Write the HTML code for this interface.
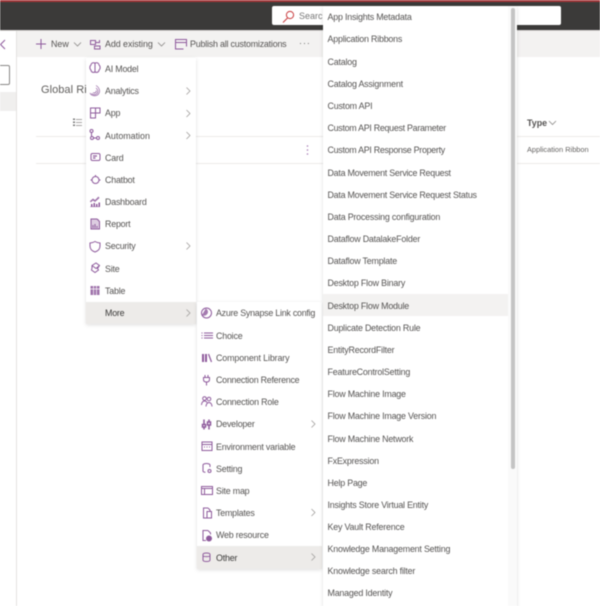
<!DOCTYPE html>
<html><head><meta charset="utf-8">
<style>
html,body{margin:0;padding:0;background:#fff;width:600px;height:606px;overflow:hidden}
#p{position:relative;width:600px;height:606px;overflow:hidden;font-family:"Liberation Sans",sans-serif;font-size:8.9px;color:#555352;filter:blur(.42px)}
.b{position:absolute}
.t{position:absolute;white-space:nowrap;line-height:12px;height:12px;letter-spacing:-.2px}
.m{position:absolute;background:#fff;box-shadow:0 1px 4px rgba(0,0,0,.13)}
svg{position:absolute;left:0;top:0}
</style></head><body><div id="p">
<div class="b" style="left:0;top:0;width:600px;height:30px;background:#3b3a39"></div>
<div class="b" style="left:0;top:0;width:600px;height:1.5px;background:#a4373a"></div>
<div class="b" style="left:0;top:30px;width:600px;height:1px;background:#d8d6d4"></div>
<div class="b" style="left:272px;top:6px;width:289px;height:19px;background:#fff;border-radius:2px"></div>
<div class="t" style="left:299px;top:10px;font-size:9px;color:#777;letter-spacing:0">Search</div>
<div class="b" style="left:17px;top:31px;width:583px;height:26px;background:#f3f2f1"></div>
<div class="b" style="left:16px;top:31px;width:1px;height:575px;background:#e4e2e0"></div>
<div class="b" style="left:-2px;top:65px;width:9.500px;height:18px;border:1px solid #8a8886;border-radius:2px"></div>
<div class="b" style="left:0;top:92px;width:16px;height:19px;background:#f0efee"></div>
<div class="t" style="left:51px;top:38px;letter-spacing:0">New</div>
<div class="t" style="left:105px;top:38px;letter-spacing:-.05px">Add existing</div>
<div class="t" style="left:190px;top:38px">Publish all customizations</div>
<div class="t" style="left:299px;top:37px;letter-spacing:1px;color:#666">···</div>
<div class="t" style="left:41px;top:84px;font-size:11px;color:#605e5c;letter-spacing:.05px">Global Ri</div>
<div class="t" style="left:527px;top:117px;font-weight:bold;color:#555352;letter-spacing:0">Type</div>
<div class="t" style="left:527px;top:144px;font-size:7.4px;color:#666463;letter-spacing:0">Application Ribbon</div>
<div class="b" style="left:36px;top:136px;width:564px;height:1px;background:#edebe9"></div>
<div class="b" style="left:36px;top:163px;width:564px;height:1px;background:#edebe9"></div>

<div class="m" style="left:86px;top:58px;width:110px;height:266px"></div>
<div class="b" style="left:86px;top:302px;width:110px;height:22px;background:#edebe9"></div>
<div class="t" style="left:105px;top:63px">AI Model</div>
<div class="t" style="left:105px;top:85px">Analytics</div>
<div class="t" style="left:105px;top:107px">App</div>
<div class="t" style="left:105px;top:129.500px;letter-spacing:0">Automation</div>
<div class="t" style="left:105px;top:152px">Card</div>
<div class="t" style="left:105px;top:174px">Chatbot</div>
<div class="t" style="left:105px;top:196px">Dashboard</div>
<div class="t" style="left:105px;top:218px">Report</div>
<div class="t" style="left:105px;top:240px">Security</div>
<div class="t" style="left:105px;top:262.500px">Site</div>
<div class="t" style="left:105px;top:285px">Table</div>
<div class="t" style="left:105px;top:307px;color:#3b3a39">More</div>

<div class="m" style="left:197px;top:302px;width:125px;height:267px"></div>
<div class="b" style="left:197px;top:546px;width:125px;height:23px;background:#edebe9"></div>
<div class="t" style="left:216px;top:307px;letter-spacing:-.24px">Azure Synapse Link config</div>
<div class="t" style="left:216px;top:329.500px">Choice</div>
<div class="t" style="left:216px;top:351.500px;letter-spacing:-.12px">Component Library</div>
<div class="t" style="left:216px;top:374px;letter-spacing:-.25px">Connection Reference</div>
<div class="t" style="left:216px;top:396px">Connection Role</div>
<div class="t" style="left:216px;top:418px">Developer</div>
<div class="t" style="left:216px;top:440.500px">Environment variable</div>
<div class="t" style="left:216px;top:462.500px">Setting</div>
<div class="t" style="left:216px;top:485px">Site map</div>
<div class="t" style="left:216px;top:507px">Templates</div>
<div class="t" style="left:216px;top:529px">Web resource</div>
<div class="t" style="left:216px;top:552px;color:#3b3a39">Other</div>

<div class="m" style="left:323px;top:6px;width:194px;height:610px"></div>
<div class="b" style="left:323px;top:294px;width:185px;height:22px;background:#f3f2f1"></div>
<div class="b" style="left:508px;top:6px;width:9px;height:600px;background:#fafafa"></div>
<div class="b" style="left:511px;top:8px;width:4px;height:461px;background:#c4c4c4;border-radius:2px"></div>
<div class="t" style="left:327.5px;top:11px">App Insights Metadata</div>
<div class="t" style="left:327.5px;top:33px">Application Ribbons</div>
<div class="t" style="left:327.5px;top:55.500px">Catalog</div>
<div class="t" style="left:327.5px;top:77.500px">Catalog Assignment</div>
<div class="t" style="left:327.5px;top:99.500px">Custom API</div>
<div class="t" style="left:327.5px;top:121.500px;letter-spacing:-.28px">Custom API Request Parameter</div>
<div class="t" style="left:327.5px;top:144px;letter-spacing:-.28px">Custom API Response Property</div>
<div class="t" style="left:327.5px;top:166.500px;letter-spacing:-.24px">Data Movement Service Request</div>
<div class="t" style="left:327.5px;top:188.500px;letter-spacing:-.24px">Data Movement Service Request Status</div>
<div class="t" style="left:327.5px;top:210.500px">Data Processing configuration</div>
<div class="t" style="left:327.5px;top:232.500px">Dataflow DatalakeFolder</div>
<div class="t" style="left:327.5px;top:255px">Dataflow Template</div>
<div class="t" style="left:327.5px;top:277px">Desktop Flow Binary</div>
<div class="t" style="left:327.5px;top:299.500px">Desktop Flow Module</div>
<div class="t" style="left:327.5px;top:321.500px">Duplicate Detection Rule</div>
<div class="t" style="left:327.5px;top:343.500px">EntityRecordFilter</div>
<div class="t" style="left:327.5px;top:365.500px">FeatureControlSetting</div>
<div class="t" style="left:327.5px;top:388px">Flow Machine Image</div>
<div class="t" style="left:327.5px;top:410px">Flow Machine Image Version</div>
<div class="t" style="left:327.5px;top:432.500px">Flow Machine Network</div>
<div class="t" style="left:327.5px;top:454.500px">FxExpression</div>
<div class="t" style="left:327.5px;top:476.500px">Help Page</div>
<div class="t" style="left:327.5px;top:498.500px">Insights Store Virtual Entity</div>
<div class="t" style="left:327.5px;top:521px">Key Vault Reference</div>
<div class="t" style="left:327.5px;top:543px">Knowledge Management Setting</div>
<div class="t" style="left:327.5px;top:565px">Knowledge search filter</div>
<div class="t" style="left:327.5px;top:587px">Managed Identity</div>

<svg width="600" height="606" viewBox="0 0 600 606" fill="none" stroke-width="1">
<!-- search -->
<g stroke="#c8393b"><circle cx="290" cy="15" r="3.600"/><path d="M287.500 18 283 22.500"/></g>
<!-- back -->
<path d="M5 40 0.500 44.500 5 49" stroke="#8e5a9c"/>
<!-- command bar -->
<g stroke="#8e5a9c">
<path d="M41 39V49M36 44H46"/>
<path d="M90.500 40.500h5v4h-5zM96 42.500h3.500v-2.500M100 46h-5.500v3h5.500z"/>
<path d="M175.500 39.500h11v3h-11zM175.500 42.500v6.500h8M186.500 42.500v4"/>
</g>
<g stroke="#8a8886" stroke-width=".8">
<path d="M74 42.500l3.500 3.500 3.500-3.500M158 42.500l3.500 3.500 3.500-3.500M549 121l3.500 3.500 3.500-3.500"/>
<path d="M76 122.500h6M76 119.500h6M76 125.500h6"/>
</g>
<g fill="#777" stroke="none"><rect x="73" y="118.500" width="2" height="1.500"/><rect x="73" y="121.500" width="2" height="1.500"/><rect x="73" y="124.500" width="2" height="1.500"/></g>
<g fill="#a87bb4" stroke="none"><circle cx="307.500" cy="146" r=".8"/><circle cx="307.500" cy="150" r=".8"/><circle cx="307.500" cy="154" r=".8"/></g>
<!-- chevrons -->
<g stroke="#a19f9d" stroke-width=".8">
<path d="M186.500 87.500l3.500 3.500-3.500 3.500M186.500 110l3.500 3.500-3.500 3.500M186.500 132l3.500 3.500-3.500 3.500M186.500 242.500l3.500 3.500-3.500 3.500M186.500 309.500l3.500 3.500-3.500 3.500"/>
<path d="M311.500 420.500l3.500 3.500-3.500 3.500M311.500 509l3.500 3.500-3.500 3.500M311.500 553.500l3.500 3.500-3.500 3.500"/>
</g>
<!-- menu 1 icons -->
<g stroke="#8e5a9c">
<path d="M95 63c-3-1-4 1-4 2-1.500 1-1.500 4 0 5 0 2 2 3 4 2zM95 63c3-1 4 1 4 2 1.500 1 1.500 4 0 5 0 2-2 3-4 2zM95 63v9"/>
<g stroke-width=".7"><path d="M96 85.500c3.500 2 4.500 6 2.500 8.500s-7 2.500-8.500-1M96 88c2 1.500 2.500 4 1 5.500s-4 1.500-5.500 0M96 90.500c.5.800.5 1.500-.5 2s-2 .5-2.500 0"/></g>
<path d="M90.500 108h5v5h-5zM95.500 108h4.500v5h-4.500zM90.500 113h5v5h-5z"/>
<path d="M91.500 132.500v4"/><circle cx="91.500" cy="131" r="1.500"/><circle cx="92" cy="138" r="1.500"/><circle cx="98" cy="138" r="1.500"/><path d="M93.500 138h3"/>
<rect x="91" y="153.500" width="9" height="7" rx="1.500"/><path d="M93 156h4M93 158h2.500" stroke-width="1.200"/>
<circle cx="95.500" cy="180" r="3.500"/><path d="M95.500 175v1.500M90.500 180h1.500M99 180h1.500"/>
</g>
<g fill="#8e5a9c" stroke="none">
<path d="M90 206.500h1v-2.500h1.500v2.500h1v-3.500h1.500v3.500h1v-2.500h1.500v2.500h1v-4h1.500v4.500h-9.500z"/>
<path d="M90 201l3-2.500 2 1.500 3.500-3.500 1 1.500-4.500 4-2-1.500-2.500 2z" opacity=".85"/>
<rect x="91" y="219" width="8" height="10" opacity=".3"/>
<path d="M92.500 225h1v3h-1zM94.500 224h1v4h-1zM96.500 226h1v2h-1z"/>
<rect x="90.500" y="286" width="9" height="9" opacity=".85"/>
</g>
<g stroke="#8e5a9c">
<path d="M91 219h6l2.500 2.500v7.500h-8.500z"/>
<path d="M95 241.500c2 1.200 3.500 1.500 5 1.500v3c0 3-2 5-5 6-3-1-5-3-5-6v-3c1.500 0 3-.3 5-1.500z"/>
<path d="M92 265.500l4-2.500 3.500 2.500-2 3 1 1.500-3.500 2.500-3.500-2.500 .5-2zM92 265.500l4 3 3.500-3"/>
</g>
<g stroke="#fff" stroke-width=".7"><path d="M93.500 286v9M96.500 286v9M90.500 289h9"/></g>
<!-- menu 2 icons -->
<g stroke="#8e5a9c">
<circle cx="206.500" cy="313" r="5"/>
<path d="M205.500 309c2 1 2.500 3 1.500 4.500s-3 2-5 1.500" fill="#8e5a9c" opacity=".8"/>
<path d="M204 333h9M204 335.500h9M204 338h9"/><path d="M201.500 333h1M201.500 335.500h1M201.500 338h1"/>
<path d="M203 354v8M206 354v8" stroke-width="2"/><path d="M208.500 354l3 8" stroke-width="1.200"/>
<path d="M205 375v2.500M208 375v2.500M203.500 377.500h6v2c0 1.500-1 2.500-3 2.500s-3-1-3-2.500zM206.500 382v3.500"/>
<circle cx="204.500" cy="398.500" r="1.800"/><circle cx="209" cy="399" r="1.800"/><path d="M201.500 405c0-2.500 1.500-4 3-4s2 .5 2.500 1.500M206 406.500c0-2.500 1.500-4 3-4s3 1.500 3 4"/>
<path d="M204 419.500v4.500M204 427v2.500M209 419.500v2.500M209 425v4.500M202.500 424.500h3v2.500h-3zM207.500 422h3v3h-3z" stroke-width="1.500"/>
<rect x="202" y="442" width="10" height="8.500"/><path d="M202 444.500h10M204 447h1M206.500 447h1M209 447h1"/>
<path d="M203 465c0-1 2-1.500 3.500-1.500s3.500.5 3.500 1.500v2M203 465v6c0 .8 1 1.200 2.500 1.300"/><circle cx="209.500" cy="471" r="1.500"/>
<rect x="201.500" y="486.500" width="11" height="8"/><path d="M201.500 488.500h11M204.500 488.500v6"/>
<path d="M208 508h-4.500v10h3M208 508l2 2v1.500"/><rect x="207" y="511.500" width="4.500" height="6.500"/>
<path d="M208 530.500h-5v10h3M208 530.500l2.500 2.500v1.500"/>
<circle cx="209" cy="538.500" r="2.500" fill="#8e5a9c"/>
<path d="M203 554.500c0-1 1.500-1.500 3.500-1.500s3.500 .5 3.500 1.500v5.500c0 1-1.500 1.500-3.500 1.500s-3.500-.5-3.500-1.500zM203 556c1 .8 6 .8 7 0"/>
</g>
</svg>
</div></body></html>
